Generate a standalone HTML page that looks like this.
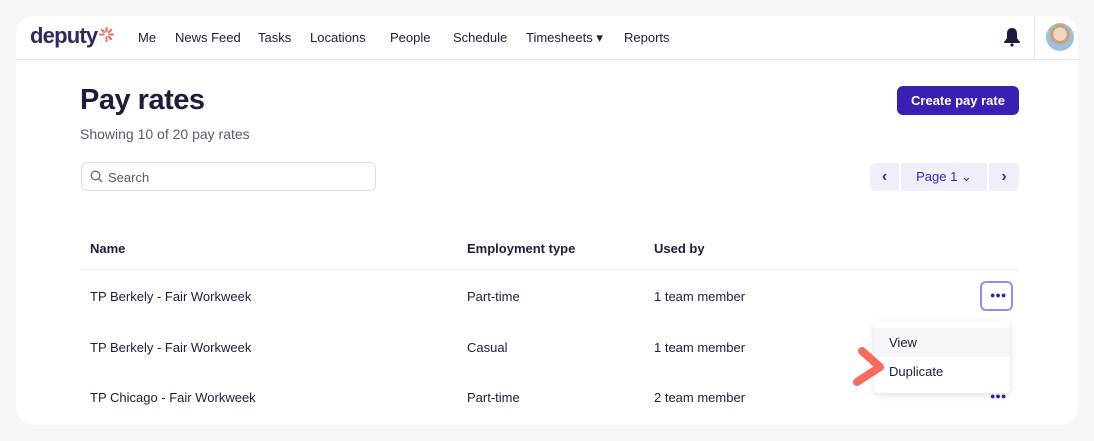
<!DOCTYPE html>
<html><head><style>
*{margin:0;padding:0;box-sizing:border-box}
body{width:1094px;height:441px;background:#f6f6f9;font-family:"Liberation Sans",sans-serif;color:#1f1b3d;position:relative;overflow:hidden}
.card{position:absolute;left:16px;top:16px;width:1062px;height:409px;background:#fff;border-radius:18px;overflow:hidden}
.nav{position:absolute;left:0;top:0;width:100%;height:44px;border-bottom:1px solid #e6e6ea}
.a{position:absolute;font-size:13px;color:#1f1b3d}
.t{position:absolute;font-size:13px;color:#1f1b3d}
.th{position:absolute;font-size:13px;font-weight:bold;color:#1f1b3d}
.dots{position:absolute;color:#3b1fb0;font-weight:bold;font-size:9px;letter-spacing:0px}
</style></head><body>
<div class="card">
<div class="nav">
<div class="a" style="left:14px;top:7px;font-size:22px;font-weight:bold;color:#2f2a5e;letter-spacing:-0.8px">deputy</div>
<svg style="position:absolute;left:83px;top:11px" width="15" height="15" viewBox="0 0 16 16" stroke="#f06b5e" stroke-width="2.2" stroke-linecap="round"><path d="M8 1v4M8 11v4M1 8h4M11 8h4M3 3l2.5 2.5M10.5 10.5l2.5 2.5M13 3l-2.5 2.5"/></svg>
<div class="a" style="left:122px;top:14px">Me</div>
<div class="a" style="left:159px;top:14px">News Feed</div>
<div class="a" style="left:242px;top:14px">Tasks</div>
<div class="a" style="left:294px;top:14px">Locations</div>
<div class="a" style="left:374px;top:14px">People</div>
<div class="a" style="left:437px;top:14px">Schedule</div>
<div class="a" style="left:510px;top:14px">Timesheets ▾</div>
<div class="a" style="left:608px;top:14px">Reports</div>
<svg style="position:absolute;left:987px;top:11px" width="18" height="20" viewBox="0 0 18 20"><path d="M9 1c-3.5 0-5 2.5-5 5.5V11L2 14h14l-2-3V6.5C14 3.5 12.5 1 9 1z" fill="#1f1b3d"/><rect x="1" y="14" width="16" height="2" rx="1" fill="#1f1b3d"/><circle cx="9" cy="18" r="1.6" fill="#1f1b3d"/></svg>
<div style="position:absolute;left:1018px;top:0;width:1px;height:44px;background:#e6e6ea"></div>
<div style="position:absolute;left:1030px;top:7px;width:28px;height:28px;border-radius:50%;background:radial-gradient(circle at 50% 40%,#f0d6c0 0 30%,#c9a178 31% 45%,#9cc0dc 46%)"></div>
</div>
<div class="a" style="left:64px;top:68px;font-size:29px;font-weight:bold;letter-spacing:-0.5px">Pay rates</div>
<div class="a" style="left:64px;top:110px;font-size:14px;color:#5b5870">Showing 10 of 20 pay rates</div>
<div style="position:absolute;left:881px;top:70px;width:122px;height:29px;background:#3a1fb5;border-radius:6px;color:#fff;font-size:13px;font-weight:bold;text-align:center;line-height:29px">Create pay rate</div>
<div style="position:absolute;left:65px;top:146px;width:295px;height:29px;border:1px solid #dcdce2;border-radius:6px"></div>
<svg style="position:absolute;left:74px;top:154px" width="13" height="13" viewBox="0 0 13 13" fill="none" stroke="#6b6880" stroke-width="1.3"><circle cx="5.5" cy="5.5" r="4.3"/><path d="M8.7 8.7l3.3 3.3"/></svg>
<div class="a" style="left:92px;top:154px;color:#5b5870">Search</div>
<div style="position:absolute;left:854px;top:147px;width:29px;height:28px;background:#efeef9;border-radius:6px 0 0 6px;color:#3a1fb5;text-align:center;line-height:28px;font-weight:bold">‹</div>
<div style="position:absolute;left:885px;top:147px;width:86px;height:28px;background:#efeef9;color:#3a1fb5;text-align:center;line-height:28px;font-size:13px">Page 1 ⌄</div>
<div style="position:absolute;left:973px;top:147px;width:30px;height:28px;background:#efeef9;border-radius:0 6px 6px 0;color:#3a1fb5;text-align:center;line-height:28px;font-weight:bold">›</div>
<div class="th" style="left:74px;top:225px">Name</div>
<div class="th" style="left:451px;top:225px">Employment type</div>
<div class="th" style="left:638px;top:225px">Used by</div>
<div style="position:absolute;left:64px;top:253px;width:939px;height:1px;background:#ececf0"></div>
<div class="t" style="left:74px;top:273px">TP Berkely - Fair Workweek</div>
<div class="t" style="left:451px;top:273px">Part-time</div>
<div class="t" style="left:638px;top:273px">1 team member</div>
<div style="position:absolute;left:964px;top:265px;width:33px;height:30px;border:2px solid #9b87f5;border-radius:6px"></div>
<div class="dots" style="left:974px;top:274px">●●●</div>
<div class="t" style="left:74px;top:324px">TP Berkely - Fair Workweek</div>
<div class="t" style="left:451px;top:324px">Casual</div>
<div class="t" style="left:638px;top:324px">1 team member</div>
<div class="t" style="left:74px;top:374px">TP Chicago - Fair Workweek</div>
<div class="t" style="left:451px;top:374px">Part-time</div>
<div class="t" style="left:638px;top:374px">2 team member</div>
<div class="dots" style="left:974px;top:375px">●●●</div>
<div style="position:absolute;left:858px;top:305px;width:136px;height:72px;background:#fff;border-radius:5px;box-shadow:0 2px 8px rgba(0,0,0,.12)">
<div style="position:absolute;left:0;top:7px;width:136px;height:29px;background:#f6f6f9"></div>
<div class="t" style="left:15px;top:14px">View</div>
<div class="t" style="left:15px;top:43px">Duplicate</div>
</div>
<svg style="position:absolute;left:836px;top:330px" width="36" height="44" viewBox="0 0 36 44"><path d="M10 5l18 16L5 36" fill="none" stroke="#f76a5e" stroke-width="8" stroke-linecap="round" stroke-linejoin="round"/></svg>
</div>
</body></html>
